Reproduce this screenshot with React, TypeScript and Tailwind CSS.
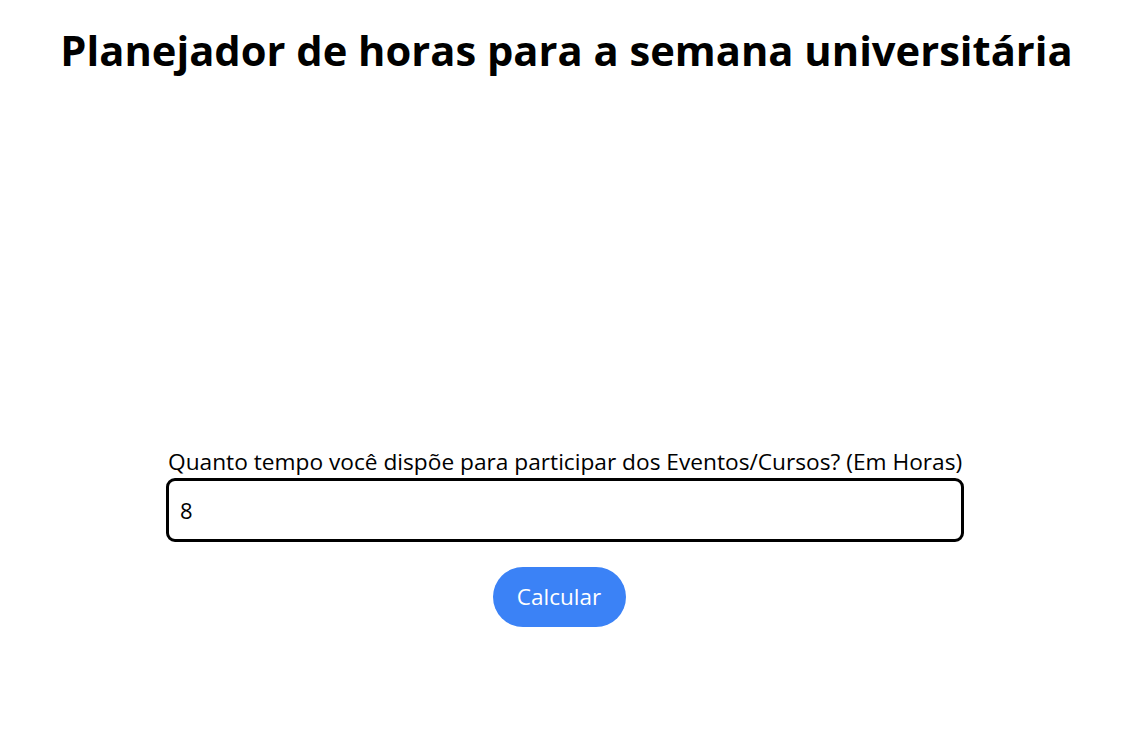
import React, { useState } from 'react';

const App = () => {
  const [hours, setHours] = useState('8');

  return (
    <div className="min-h-screen bg-white text-black font-['Segoe_UI','Open_Sans','Noto_Sans',sans-serif]">
      <h1 className="pt-[20px] text-center text-[41.7px] font-bold leading-[60px]">
        Planejador de horas para a semana universitária
      </h1>
      <div className="mt-[366px] flex flex-col items-center">
        <div className="mr-[3px] flex flex-col">
          <label htmlFor="hours" className="pl-[2px] text-[22.7px] leading-[32px]">
            Quanto tempo você dispõe para participar dos Eventos/Cursos? (Em Horas)
          </label>
          <input
            id="hours"
            type="number"
            value={hours}
            onChange={(e) => setHours(e.target.value)}
            className="h-[64px] w-[798px] rounded-[9px] border-[3px] border-black px-[11px] text-[22px] outline-none"
          />
        </div>
        <button className="mr-[14px] mt-[25px] h-[60px] rounded-full bg-[#3b82f6] pl-[24px] pr-[25px] text-[22.5px] text-white">
          Calcular
        </button>
      </div>
    </div>
  );
};

export default App;
